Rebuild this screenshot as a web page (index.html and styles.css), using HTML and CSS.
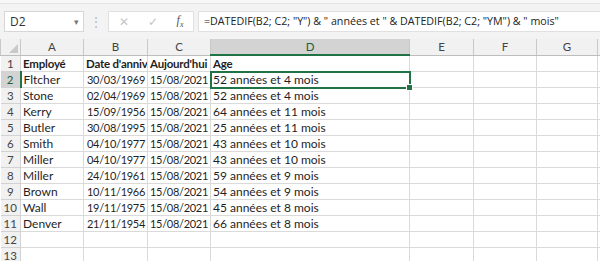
FILE: index.html
```html
<!DOCTYPE html>
<html lang="fr">
<head>
    <meta charset="UTF-8">
    <title>Classeur - DATEDIF</title>
    <link rel="stylesheet" href="styles.css">
</head>
<body>

    <!-- Ribbon edge -->
    <div class="ribbon-edge"></div>

    <!-- Formula bar -->
    <div class="formula-bar">
        <div class="name-box">
            <span>D2</span>
            <span class="drop">&#9662;</span>
        </div>
        <div class="grip">&#8942;</div>
        <div class="fx-box">
            <span class="fx-btn cancel">&#10005;</span>
            <span class="fx-btn ok">&#10003;</span>
            <span class="fx-btn fx"><i>f</i><sub>x</sub></span>
        </div>
        <div class="formula-input">=DATEDIF(B2; C2; "Y") &amp; " années et " &amp; DATEDIF(B2; C2; "YM") &amp; " mois"</div>
    </div>

    <!-- Sheet -->
    <table class="sheet">
        <colgroup>
            <col class="c-row">
            <col class="c-a">
            <col class="c-b">
            <col class="c-c">
            <col class="c-d">
            <col class="c-e">
            <col class="c-f">
            <col class="c-g">
            <col>
        </colgroup>
        <thead>
            <tr>
                <th class="corner"><span class="tri"></span></th>
                <th>A</th>
                <th>B</th>
                <th>C</th>
                <th class="sel-col">D</th>
                <th>E</th>
                <th>F</th>
                <th>G</th>
                <th></th>
            </tr>
        </thead>
        <tbody>
            <tr>
                <th>1</th>
                <td class="bold">Employé</td>
                <td class="bold">Date d'anniv</td>
                <td class="bold">Aujourd'hui</td>
                <td class="bold">Age</td>
                <td></td><td></td><td></td><td></td>
            </tr>
            <tr>
                <th class="sel-row">2</th>
                <td>Fltcher</td>
                <td class="num">30/03/1969</td>
                <td class="num">15/08/2021</td>
                <td class="active">52 années et 4 mois<span class="handle"></span></td>
                <td></td><td></td><td></td><td></td>
            </tr>
            <tr>
                <th>3</th>
                <td>Stone</td>
                <td class="num">02/04/1969</td>
                <td class="num">15/08/2021</td>
                <td>52 années et 4 mois</td>
                <td></td><td></td><td></td><td></td>
            </tr>
            <tr>
                <th>4</th>
                <td>Kerry</td>
                <td class="num">15/09/1956</td>
                <td class="num">15/08/2021</td>
                <td>64 années et 11 mois</td>
                <td></td><td></td><td></td><td></td>
            </tr>
            <tr>
                <th>5</th>
                <td>Butler</td>
                <td class="num">30/08/1995</td>
                <td class="num">15/08/2021</td>
                <td>25 années et 11 mois</td>
                <td></td><td></td><td></td><td></td>
            </tr>
            <tr>
                <th>6</th>
                <td>Smith</td>
                <td class="num">04/10/1977</td>
                <td class="num">15/08/2021</td>
                <td>43 années et 10 mois</td>
                <td></td><td></td><td></td><td></td>
            </tr>
            <tr>
                <th>7</th>
                <td>Miller</td>
                <td class="num">04/10/1977</td>
                <td class="num">15/08/2021</td>
                <td>43 années et 10 mois</td>
                <td></td><td></td><td></td><td></td>
            </tr>
            <tr>
                <th>8</th>
                <td>Miller</td>
                <td class="num">24/10/1961</td>
                <td class="num">15/08/2021</td>
                <td>59 années et 9 mois</td>
                <td></td><td></td><td></td><td></td>
            </tr>
            <tr>
                <th>9</th>
                <td>Brown</td>
                <td class="num">10/11/1966</td>
                <td class="num">15/08/2021</td>
                <td>54 années et 9 mois</td>
                <td></td><td></td><td></td><td></td>
            </tr>
            <tr>
                <th>10</th>
                <td>Wall</td>
                <td class="num">19/11/1975</td>
                <td class="num">15/08/2021</td>
                <td>45 années et 8 mois</td>
                <td></td><td></td><td></td><td></td>
            </tr>
            <tr>
                <th>11</th>
                <td>Denver</td>
                <td class="num">21/11/1954</td>
                <td class="num">15/08/2021</td>
                <td>66 années et 8 mois</td>
                <td></td><td></td><td></td><td></td>
            </tr>
            <tr>
                <th>12</th>
                <td></td><td></td><td></td><td></td>
                <td></td><td></td><td></td><td></td>
            </tr>
            <tr>
                <th>13</th>
                <td></td><td></td><td></td><td></td>
                <td></td><td></td><td></td><td></td>
            </tr>
        </tbody>
    </table>

</body>
</html>
```

FILE: styles.css
```css
body {
    margin: 0;
    background-color: #ffffff;
    font-family: Lato, "Open Sans", sans-serif;
    color: #1f1f1f;
    overflow: hidden;
}
.ribbon-edge {
    height: 3px;
    background-color: #f7f7f7;
    border-bottom: 1px solid #e2e2e2;
}
.formula-bar {
    display: flex;
    align-items: center;
    height: 35px;
    background-color: #f3f3f3;
    padding: 0 0 0 4px;
}
.name-box {
    display: flex;
    align-items: center;
    justify-content: space-between;
    box-sizing: border-box;
    width: 80px;
    height: 21px;
    background-color: #ffffff;
    border: 1px solid #d6d6d6;
    padding: 0 4px 0 5px;
    font-family: "Open Sans", sans-serif;
    font-size: 12px;
    color: #333;
}
.name-box .drop {
    font-size: 9px;
    color: #777;
}
.grip {
    width: 24px;
    text-align: center;
    color: #b8b8b8;
    font-size: 12px;
}
.fx-box {
    display: flex;
    align-items: center;
    justify-content: space-around;
    box-sizing: border-box;
    width: 86px;
    height: 21px;
    background-color: #ffffff;
    border: 1px solid #e0e0e0;
}
.fx-btn {
    color: #c4c4c4;
    font-size: 12px;
}
.fx-btn.fx {
    color: #555;
    font-family: "Liberation Serif", serif;
    font-size: 12px;
}
.fx-btn.fx sub {
    font-size: 8px;
    font-style: italic;
}
.formula-input {
    flex: 1;
    box-sizing: border-box;
    height: 21px;
    margin-left: 4px;
    background-color: #ffffff;
    border: 1px solid #e0e0e0;
    border-right: none;
    padding: 2px 0 0 5px;
    font-family: "Open Sans", sans-serif;
    font-size: 10.7px;
    color: #222;
    white-space: nowrap;
    overflow: hidden;
}
.sheet {
    border-collapse: collapse;
    table-layout: fixed;
    width: 610px;
    font-size: 12px;
}
.c-row { width: 20px; }
.c-a { width: 63px; }
.c-b { width: 64px; }
.c-c { width: 63px; }
.c-d { width: 199px; }
.c-e { width: 64px; }
.c-f { width: 63px; }
.c-g { width: 61px; }
.sheet th {
    height: 15px;
    padding: 0;
    background-color: #f1f1f1;
    border: 1px solid #d2d2d2;
    font-weight: normal;
    color: #444;
    font-size: 11.5px;
    text-align: center;
}
.sheet thead th {
    height: 15px;
    border-color: #d2d2d2 #c8c8c8 #bdbdbd #c8c8c8;
    border-top: none;
}
.sheet tbody th {
    border-left: none;
}
.sheet .corner {
    position: relative;
}
.sheet .tri {
    position: absolute;
    right: 2px;
    bottom: 2px;
    width: 0;
    height: 0;
    border-left: 9px solid transparent;
    border-bottom: 9px solid #c9c9c9;
}
.sheet th.sel-col {
    background-color: #d3d3d3;
    border-bottom: 2px solid #217346;
    color: #215e3b;
}
.sheet th.sel-row {
    background-color: #d3d3d3;
    border-right: 2px solid #217346;
    color: #215e3b;
}
.sheet td {
    height: 15px;
    padding: 0 2px;
    border: 1px solid #dadada;
    white-space: nowrap;
    overflow: hidden;
    line-height: 15px;
}
.sheet td.bold {
    font-weight: bold;
    font-size: 11.5px;
    letter-spacing: -0.2px;
}
.sheet td.num {
    text-align: right;
    font-size: 11px;
    letter-spacing: -0.3px;
}
.sheet td.active {
    position: relative;
    overflow: visible;
    outline: 2px solid #217346;
    outline-offset: -1px;
}
.handle {
    position: absolute;
    right: -4px;
    bottom: -4px;
    width: 5px;
    height: 5px;
    background-color: #217346;
    border: 1px solid #ffffff;
}
```
